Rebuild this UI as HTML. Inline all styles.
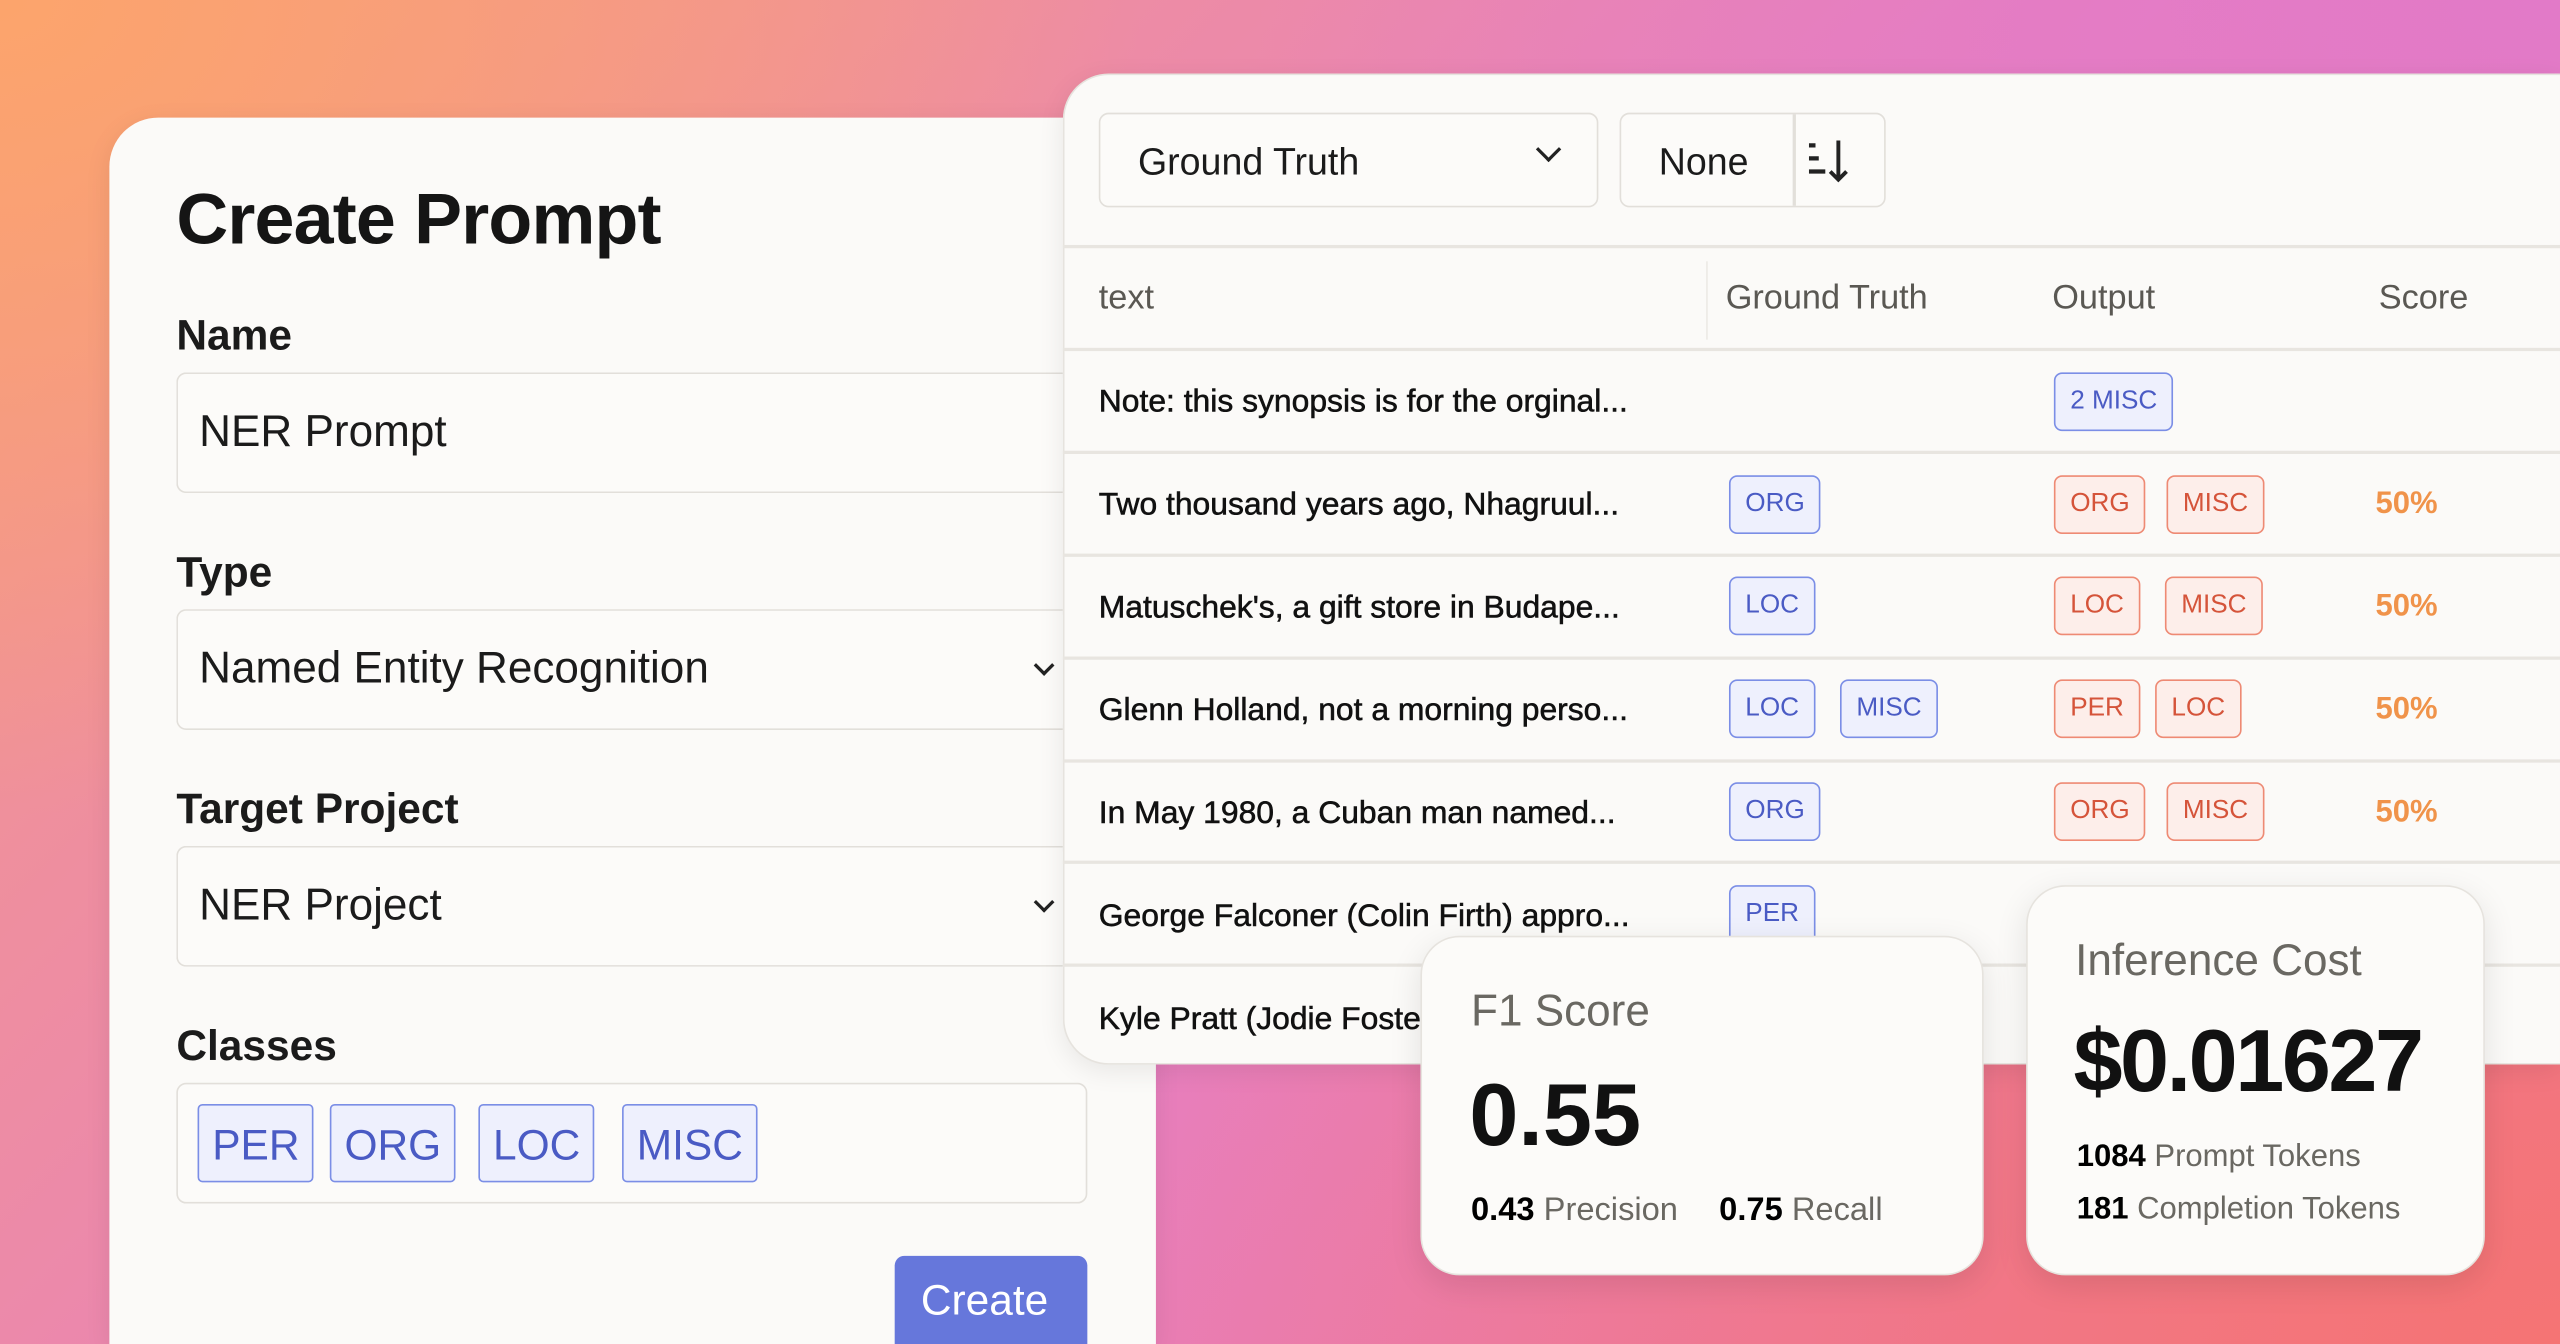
<!DOCTYPE html>
<html><head><meta charset="utf-8"><style>
*{box-sizing:border-box;margin:0;padding:0}
html,body{width:2560px;height:1344px;overflow:hidden}
body{font-family:"Liberation Sans",sans-serif;background:#f07a9a;position:relative}
#s{position:absolute;left:0;top:0;width:1568px;height:823px;transform:scale(1.63265,1.63305);transform-origin:0 0;overflow:hidden;
background:
radial-gradient(ellipse 700px 500px at 0 0,#fca46c 0%,rgba(252,164,108,0) 100%),
radial-gradient(ellipse 900px 600px at 1568px 823px,#f57474 0%,rgba(245,116,116,0) 100%),
radial-gradient(ellipse 800px 600px at 1568px 0,#e27ac8 0%,rgba(226,122,200,0) 100%),
linear-gradient(135deg,#f49a86 0%,#e77fc0 55%,#ee7892 100%)}
.card{position:absolute;background:#fbfaf8;box-shadow:0 4px 16px rgba(0,0,0,.08)}
.left{left:67px;top:72px;width:641px;height:751px;border-radius:30px 30px 0 0}
.right{left:651px;top:45px;width:917px;height:607px;border-radius:28px 0 0 28px;border:1px solid #e6e3de;border-right:none}
h1{position:absolute;left:108px;top:110px;font-size:44px;font-weight:700;color:#151515;letter-spacing:-0.5px}
.lbl{position:absolute;left:108px;font-size:26px;font-weight:700;color:#1b1b1b}
.inp{position:absolute;left:108px;width:543px;height:74px;border:1.5px solid #e2dfda;border-right:none;border-radius:6px 0 0 6px;background:#fcfbf9;font-size:27px;color:#1b1b1b;padding:20px 0 0 13px}
.chev{position:absolute;left:635px;width:9px;height:9px;border-right:2.5px solid #222;border-bottom:2.5px solid #222;transform:rotate(45deg);z-index:5}
.cls{position:absolute;top:676px;height:48px;border:1.5px solid #7b8ee6;background:#eef0fd;color:#4a5bc4;font-size:26px;border-radius:3px;padding:9px 8px 0}
.btn{position:absolute;left:548px;top:769px;width:118px;height:54px;background:#6677db;border-radius:6px 6px 0 0;color:#fff;font-size:26px;padding:12px 0 0 16px}
.sel{position:absolute;top:69px;height:58px;border:1.5px solid #e2dfda;border-radius:6px;background:#fcfbf9;font-size:23px;color:#1b1b1b}
.th{position:absolute;top:171px;font-size:21px;color:#5a5853}
.hr{position:absolute;left:651px;width:917px;height:2px;background:#e8e5e0}
.td{position:absolute;left:673px;font-size:19.5px;color:#111;-webkit-text-stroke:0.35px #111}
.b{position:absolute;height:36px;border:1.5px solid #7b8ee6;background:#eef0fd;color:#4a5bc4;font-size:16px;border-radius:5px;padding:8px 9px 0}
.r{border-color:#ee8a74;background:#fdeeea;color:#d5543a}
.pct{position:absolute;left:1455px;font-size:19px;color:#f0934a;font-weight:600}
.st{position:absolute;background:#fcfbf9;border:1.5px solid #e6e3de;border-radius:24px;box-shadow:0 6px 20px rgba(0,0,0,.1)}
.g{color:#6a6862}
</style></head><body><div id="s">
<div class="card left"></div>
<h1>Create Prompt</h1>
<div class="lbl" style="top:190px">Name</div>
<div class="inp" style="top:228px">NER Prompt</div>
<div class="lbl" style="top:335px">Type</div>
<div class="inp" style="top:373px">Named Entity Recognition</div>
<div class="lbl" style="top:480px">Target Project</div>
<div class="inp" style="top:518px">NER Project</div>
<div class="lbl" style="top:625px">Classes</div>
<div class="inp" style="top:663px;width:558px;border-right:1.5px solid #e2dfda;border-radius:6px"></div>
<div class="cls" style="left:121px">PER</div>
<div class="cls" style="left:202px">ORG</div>
<div class="cls" style="left:293px">LOC</div>
<div class="cls" style="left:381px">MISC</div>
<div class="btn">Create</div>

<div class="card right"></div>
<div class="chev" style="top:403px"></div>
<div class="chev" style="top:548px"></div>
<div class="sel" style="left:673px;width:306px;padding:16px 0 0 23px">Ground Truth<div style="position:absolute;top:16px;right:24px;width:11px;height:11px;border-right:2.5px solid #222;border-bottom:2.5px solid #222;transform:rotate(45deg)"></div></div>
<div class="sel" style="left:992px;width:163px;padding:16px 0 0 23px">None
<div style="position:absolute;left:105px;top:0;width:1.5px;height:56px;background:#e2dfda"></div>
<svg style="position:absolute;left:112px;top:12px" width="34" height="32" viewBox="0 0 34 32"><path d="M3 7h4M3 15h6M3 23h10" stroke="#222" stroke-width="2.6"/><path d="M21 4v24M16 23l5 5 5-5" stroke="#222" stroke-width="2.4" fill="none"/></svg></div>
<div class="hr" style="top:150px"></div>
<div class="th" style="left:673px">text</div>
<div style="position:absolute;left:1045px;top:160px;width:1px;height:48px;background:#eceae6"></div>
<div class="th" style="left:1057px">Ground Truth</div>
<div class="th" style="left:1257px">Output</div>
<div class="th" style="left:1457px">Score</div>
<div class="hr" style="top:213px"></div>
<div class="hr" style="top:276px"></div>
<div class="hr" style="top:339px"></div>
<div class="hr" style="top:402px"></div>
<div class="hr" style="top:465px"></div>
<div class="hr" style="top:527px"></div>
<div class="hr" style="top:590px"></div>

<div class="td" style="top:235px">Note: this synopsis is for the orginal...</div>
<div class="b" style="left:1258px;top:228px">2 MISC</div>

<div class="td" style="top:298px">Two thousand years ago, Nhagruul...</div>
<div class="b" style="left:1059px;top:291px">ORG</div>
<div class="b r" style="left:1258px;top:291px">ORG</div><div class="b r" style="left:1327px;top:291px">MISC</div>
<div class="pct" style="top:298px">50%</div>

<div class="td" style="top:361px">Matuschek's, a gift store in Budape...</div>
<div class="b" style="left:1059px;top:353px">LOC</div>
<div class="b r" style="left:1258px;top:353px">LOC</div><div class="b r" style="left:1326px;top:353px">MISC</div>
<div class="pct" style="top:361px">50%</div>

<div class="td" style="top:424px">Glenn Holland, not a morning perso...</div>
<div class="b" style="left:1059px;top:416px">LOC</div><div class="b" style="left:1127px;top:416px">MISC</div>
<div class="b r" style="left:1258px;top:416px">PER</div><div class="b r" style="left:1320px;top:416px">LOC</div>
<div class="pct" style="top:424px">50%</div>

<div class="td" style="top:487px">In May 1980, a Cuban man named...</div>
<div class="b" style="left:1059px;top:479px">ORG</div>
<div class="b r" style="left:1258px;top:479px">ORG</div><div class="b r" style="left:1327px;top:479px">MISC</div>
<div class="pct" style="top:487px">50%</div>

<div class="td" style="top:550px">George Falconer (Colin Firth) appro...</div>
<div class="b" style="left:1059px;top:542px">PER</div>
<div class="td" style="top:613px">Kyle Pratt (Jodie Foster...</div>

<div class="st" style="left:870px;top:573px;width:345px;height:208px">
<div class="g" style="position:absolute;left:30px;top:30px;font-size:27px">F1 Score</div>
<div style="position:absolute;left:29px;top:78px;font-size:54px;font-weight:700;color:#111">0.55</div>
<div style="position:absolute;left:30px;top:156px;font-size:20px"><b style="font-weight:600">0.43</b> <span class="g">Precision</span></div>
<div style="position:absolute;left:182px;top:156px;font-size:20px"><b style="font-weight:600">0.75</b> <span class="g">Recall</span></div>
</div>
<div class="st" style="left:1241px;top:542px;width:281px;height:239px">
<div class="g" style="position:absolute;left:29px;top:30px;font-size:27px">Inference Cost</div>
<div style="position:absolute;left:28px;top:76px;font-size:54px;font-weight:700;color:#111;letter-spacing:-1.5px">$0.01627</div>
<div style="position:absolute;left:30px;top:155px;font-size:19px"><b style="font-weight:600">1084</b> <span class="g">Prompt Tokens</span></div>
<div style="position:absolute;left:30px;top:187px;font-size:19px"><b style="font-weight:600">181</b> <span class="g">Completion Tokens</span></div>
</div>
</div></body></html>
